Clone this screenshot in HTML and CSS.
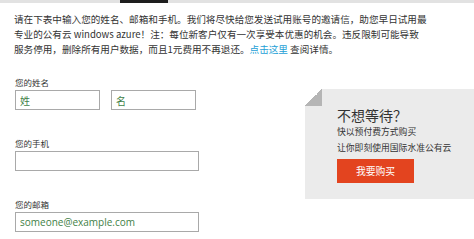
FILE: index.html
```html
<!DOCTYPE html>
<html>
<head>
  <title>试用申请</title>
  <meta charset="utf-8">
  <link rel="stylesheet" href="styles.css">
</head>
<body>

    <div class="topbar"><span class="tab"></span></div>

    <p class="intro">
        请在下表中输入您的姓名、邮箱和手机。我们将尽快给您发送试用账号的邀请信，助您早日试用最专业的公有云 windows azure！注：每位新客户仅有一次享受本优惠的机会。违反限制可能导致<br>服务停用，删除所有用户数据，而且1元费用不再退还。<a href="#">点击这里</a> 查阅详情。
    </p>

    <div class="main">

        <form class="form" id="form">
            <section class="inputsec">
                <label for="lastname">您的姓名</label>
                <div class="namerow">
                    <input id="lastname" type="text" name="lastname" value="姓" />
                    <input id="firstname" type="text" name="firstname" value="名" />
                </div>
            </section>

            <section class="inputsec">
                <label for="phone">您的手机</label>
                <input id="phone" class="wide" type="text" name="phone" />
            </section>

            <section class="inputsec">
                <label for="email">您的邮箱</label>
                <input id="email" class="wide" type="text" name="email" value="someone@example.com" />
            </section>
        </form>

        <div class="promo">
            <h2>不想等待？</h2>
            <p>快以预付费方式购买<br>让你即刻使用国际水准公有云</p>
            <button>我要购买</button>
        </div>

    </div>

</body>
</html>
```

FILE: styles.css
```css
body{
    margin: 0;
    font-family: "Noto Sans CJK SC", "Open Sans", sans-serif;
    color: #333;
    background: #fff;
}

.topbar{
    height: 3px;
    background: #e2e2e2;
}

.topbar .tab{
    display: block;
    margin-left: 120px;
    width: 48px;
    height: 3px;
    background: #1e1e1e;
}

.intro{
    margin: 9px 0 0 14px;
    width: 416px;
    font-size: 9.6px;
    line-height: 15px;
}

.intro a{
    color: #1e9fd6;
    text-decoration: none;
}

.main{
    display: flex;
    align-items: flex-start;
    margin-top: 20px;
}

.form{
    width: 305px;
    padding-left: 15px;
    box-sizing: border-box;
}

.inputsec{
    display: flex;
    flex-direction: column;
    margin-bottom: 28px;
}

.inputsec:last-child{
    margin-bottom: 0;
}

.inputsec label{
    font-size: 8.5px;
    line-height: 10px;
    margin-bottom: 3px;
}

.namerow{
    display: flex;
    gap: 11px;
}

.inputsec input{
    font: inherit;
    font-size: 10px;
    color: #3f7f47;
    height: 20px;
    padding: 0 4px;
    border: 1px solid #a9a9a9;
    box-sizing: border-box;
    width: 85px;
}

.inputsec input.wide{
    width: 184px;
}

#email{
    font-family: "Open Sans", sans-serif;
    font-size: 10px;
}

.promo{
    position: relative;
    flex: 1;
    margin-top: 12px;
    height: 110px;
    padding: 18px 0 0 32px;
    box-sizing: border-box;
    background: #ebebeb;
}

.promo::before{
    content: "";
    position: absolute;
    top: 0;
    left: 0;
    width: 17px;
    height: 17px;
    background: linear-gradient(135deg, #fff 50%, #b5b5b5 50%);
}

.promo h2{
    margin: 0;
    font-size: 14px;
    font-weight: normal;
    line-height: 16px;
}

.promo p{
    margin: 1px 0 0;
    font-size: 8.8px;
    line-height: 16px;
}

.promo button{
    font: inherit;
    font-size: 9.8px;
    margin-top: 0;
    width: 77px;
    height: 24px;
    border: none;
    color: #fff;
    background: #e3441f;
    cursor: pointer;
}
```
